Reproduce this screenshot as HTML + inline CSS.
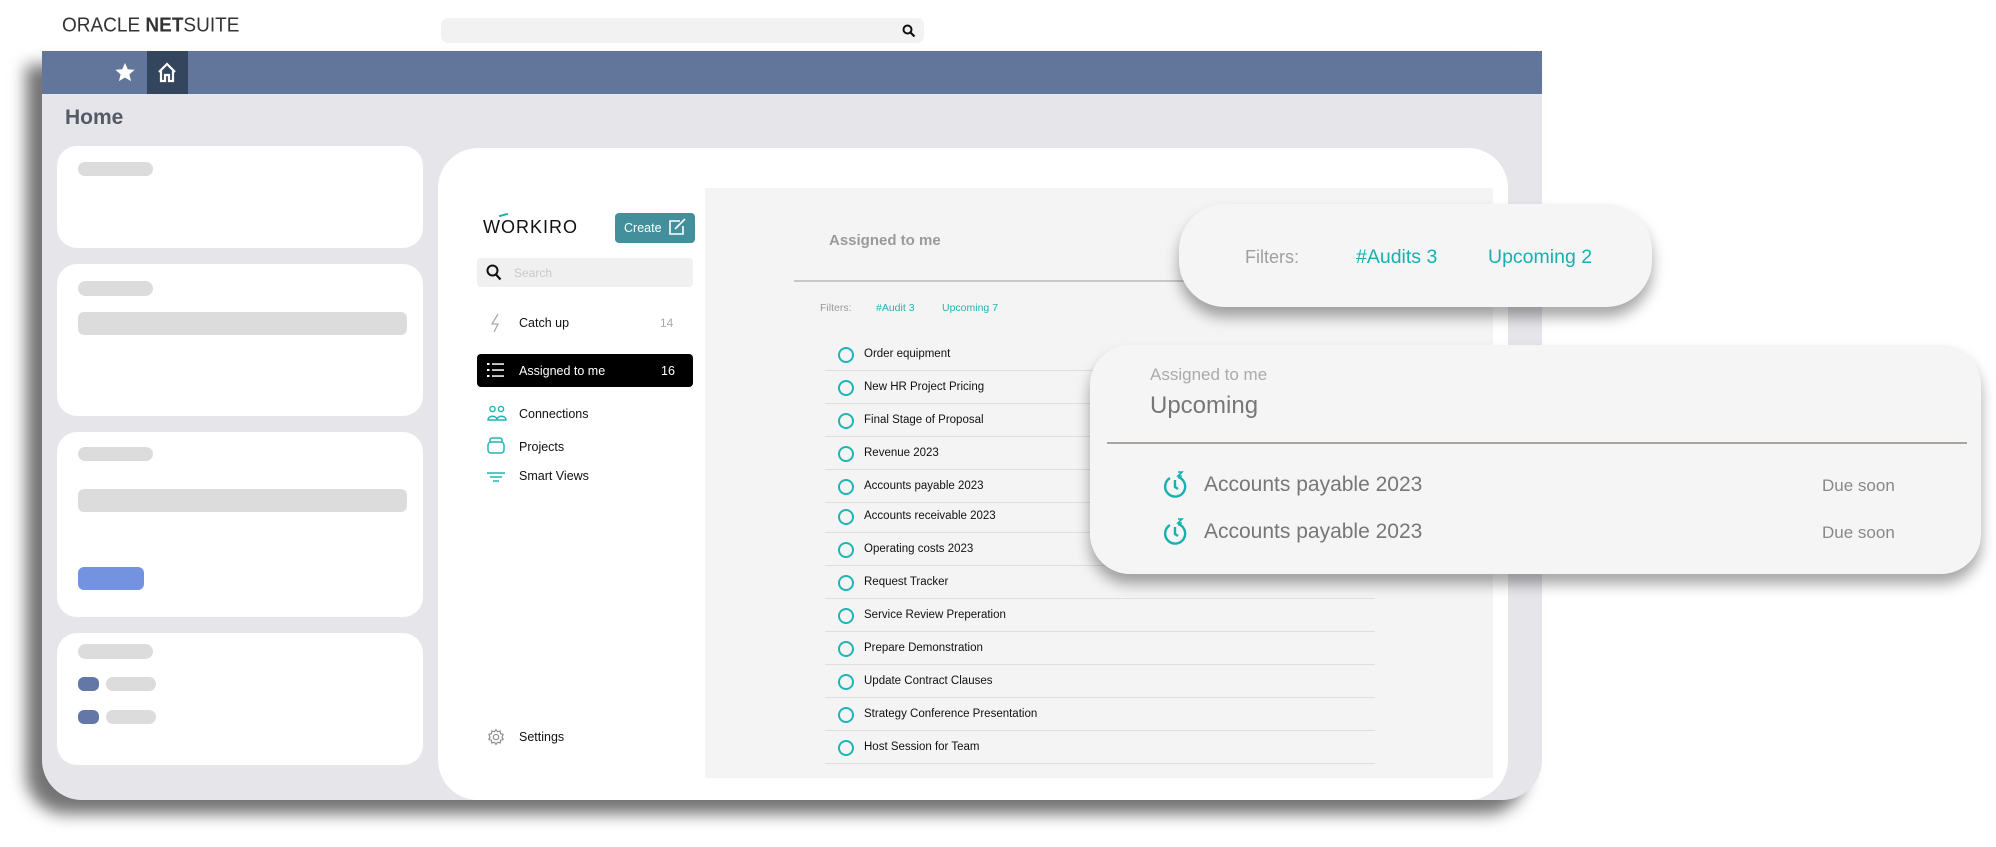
<!DOCTYPE html>
<html><head><meta charset="utf-8"><style>
*{box-sizing:border-box;margin:0;padding:0}
body{width:1996px;height:847px;background:#fff;position:relative;overflow:hidden;font-family:"Liberation Sans",sans-serif}
.a{position:absolute}
.pill{position:absolute;background:#dcdcdc;border-radius:8px}
.card{position:absolute;left:57px;width:366px;background:#fff;border-radius:20px}
.nav{position:absolute;left:519px;font-size:12.5px;color:#111}
.row{position:absolute;left:825px;width:550px;height:33px;border-bottom:1.5px solid #dedede}
.row i{position:absolute;left:13px;top:9px;width:16px;height:16px;border:2px solid #1fb5b5;border-radius:50%}
.row span{position:absolute;left:39px;top:10px;font-size:11.5px;color:#111}
</style></head><body>
<div class="a" style="left:62px;top:15px;font-size:19px;color:#333;letter-spacing:0px;transform:scaleY(1.05)">ORACLE <b style="font-weight:bold">NET</b>SUITE</div>
<div class="a" style="left:441px;top:18px;width:483px;height:25px;background:#f2f2f2;border-radius:7px"></div>
<svg class="a" style="left:902px;top:24px" width="14" height="14" viewBox="0 0 14 14"><circle cx="5.5" cy="5.5" r="4" fill="none" stroke="#111" stroke-width="2"/><path d="M8.5 8.5l4 4" stroke="#111" stroke-width="2.2"/></svg>
<div class="a" style="left:42px;top:51px;width:1500px;height:749px;background:#e5e5ea;border-radius:0 0 40px 40px;box-shadow:-16px 14px 16px rgba(0,0,0,0.55)"></div>
<div class="a" style="left:42px;top:51px;width:1500px;height:43px;background:#62759b"></div>
<div class="a" style="left:147px;top:51px;width:41px;height:43px;background:#34465e"></div>
<svg class="a" style="left:114px;top:61px" width="22" height="22" viewBox="0 0 24 24"><path d="M12 2l3 7 7.5.6-5.7 5 1.8 7.4L12 18l-6.6 4 1.8-7.4-5.7-5L9 9z" fill="#fff"/></svg>
<svg class="a" style="left:156px;top:62px" width="22" height="21" viewBox="0 0 22 21"><path d="M3 10L11 2l8 8M5 8v11h4v-6h4v6h4V8" fill="none" stroke="#fff" stroke-width="2.2"/></svg>
<div class="a" style="left:65px;top:106px;font-size:21px;font-weight:bold;color:#555a66">Home</div>
<div class="card" style="top:146px;height:102px"></div>
<div class="pill" style="left:78px;top:162px;width:75px;height:14px"></div>
<div class="card" style="top:264px;height:152px"></div>
<div class="pill" style="left:78px;top:281px;width:75px;height:15px"></div>
<div class="pill" style="left:78px;top:312px;width:329px;height:23px;border-radius:6px"></div>
<div class="card" style="top:432px;height:185px"></div>
<div class="pill" style="left:78px;top:447px;width:75px;height:14px"></div>
<div class="pill" style="left:78px;top:489px;width:329px;height:23px;border-radius:6px"></div>
<div class="a" style="left:78px;top:567px;width:66px;height:23px;background:#7393e0;border-radius:6px"></div>
<div class="card" style="top:633px;height:132px"></div>
<div class="pill" style="left:78px;top:644px;width:75px;height:15px"></div>
<div class="a" style="left:78px;top:677px;width:21px;height:14px;background:#6478a8;border-radius:6px"></div>
<div class="pill" style="left:106px;top:677px;width:50px;height:14px"></div>
<div class="a" style="left:78px;top:710px;width:21px;height:14px;background:#6478a8;border-radius:6px"></div>
<div class="pill" style="left:106px;top:710px;width:50px;height:14px"></div>
<div class="a" style="left:438px;top:148px;width:1070px;height:652px;background:#fff;border-radius:40px"></div>
<div class="a" style="left:705px;top:188px;width:788px;height:590px;background:#f4f4f4"></div>
<div class="a" style="left:483px;top:217px;font-size:18px;color:#111;letter-spacing:1px">WORKIRO</div>
<div class="a" style="left:499px;top:214px;width:9px;height:2px;background:#2aa;transform:rotate(-15deg)"></div>
<div class="a" style="left:615px;top:213px;width:80px;height:30px;background:#43909c;border-radius:4px;color:#fff;font-size:12.5px;padding:8px 0 0 9px">Create</div>
<svg class="a" style="left:668px;top:218px" width="20" height="18" viewBox="0 0 20 18"><path d="M12 3H2v13h13V8" fill="none" stroke="#fff" stroke-width="1.6"/><path d="M7 11l10-10" stroke="#fff" stroke-width="1.6"/></svg>
<div class="a" style="left:477px;top:258px;width:216px;height:29px;background:#f0f0f0;border-radius:4px"></div>
<svg class="a" style="left:486px;top:264px" width="16" height="17" viewBox="0 0 16 17"><circle cx="6.5" cy="6.5" r="5" fill="none" stroke="#111" stroke-width="2"/><path d="M10 10.5l4.5 5" stroke="#111" stroke-width="2.2"/></svg>
<div class="a" style="left:514px;top:266px;font-size:12px;color:#c8c8c8">Search</div>
<svg class="a" style="left:490px;top:313px" width="12" height="20" viewBox="0 0 12 20"><path d="M8 1L2 11h6l-4 8" fill="none" stroke="#aaa" stroke-width="1.3"/></svg>
<div class="nav" style="top:316px">Catch up</div>
<div class="a" style="left:660px;top:316px;font-size:12px;color:#aaa">14</div>
<div class="a" style="left:477px;top:354px;width:216px;height:33px;background:#000;border-radius:4px"></div>
<svg class="a" style="left:487px;top:362px" width="18" height="16" viewBox="0 0 18 16"><g fill="#fff"><rect x="0" y="1" width="2.5" height="2"/><rect x="0" y="7" width="2.5" height="2"/><rect x="0" y="13" width="2.5" height="2"/><rect x="5" y="1.3" width="12" height="1.5"/><rect x="5" y="7.3" width="12" height="1.5"/><rect x="5" y="13.3" width="12" height="1.5"/></g></svg>
<div class="nav" style="top:364px;color:#fff">Assigned to me</div>
<div class="a" style="left:661px;top:364px;font-size:12.5px;color:#fff">16</div>
<svg class="a" style="left:487px;top:405px" width="20" height="16" viewBox="0 0 20 16"><g fill="none" stroke="#1fb5b5" stroke-width="1.4"><circle cx="5.5" cy="4" r="2.6"/><circle cx="14" cy="4" r="2.6"/><path d="M1 15c0-5 9-5 9 0zM10 15c0-5 9-5 9 0z"/></g></svg>
<div class="nav" style="top:407px">Connections</div>
<svg class="a" style="left:487px;top:437px" width="18" height="17" viewBox="0 0 18 17"><g fill="none" stroke="#1fb5b5" stroke-width="1.5"><rect x="1" y="5" width="16" height="11" rx="3"/><path d="M3 5V3a2 2 0 012-2h8a2 2 0 012 2v2"/></g></svg>
<div class="nav" style="top:440px">Projects</div>
<svg class="a" style="left:487px;top:471px" width="18" height="12" viewBox="0 0 18 12"><g stroke="#1fb5b5" stroke-width="1.5"><path d="M0 2h18M3 6h12M6 10h6"/></g></svg>
<div class="nav" style="top:469px">Smart Views</div>
<svg class="a" style="left:487px;top:728px" width="18" height="18" viewBox="0 0 24 24"><g fill="none" stroke="#888" stroke-width="1.5"><circle cx="12" cy="12" r="3.5"/><path d="M12 2l2 3 3.5-1 .5 3.5 3.5 1-1.5 3.5 1.5 3.5-3.5 1-.5 3.5-3.5-1-2 3-2-3-3.5 1-.5-3.5-3.5-1L4 12 2.5 8.5l3.5-1L6.5 4 10 5z"/></g></svg>
<div class="nav" style="top:730px">Settings</div>
<div class="a" style="left:829px;top:232px;font-size:15px;font-weight:bold;color:#9a9a9a">Assigned to me</div>
<div class="a" style="left:794px;top:280px;width:700px;height:2px;background:#c8c8c8"></div>
<div class="a" style="left:820px;top:302px;font-size:10.5px;color:#999">Filters:</div>
<div class="a" style="left:876px;top:302px;font-size:10.5px;color:#1fb5b5">#Audit 3</div>
<div class="a" style="left:942px;top:302px;font-size:10.5px;color:#1fb5b5">Upcoming 7</div>
<div class="row" style="top:338px"><i></i><span>Order equipment</span></div>
<div class="row" style="top:371px"><i></i><span>New HR Project Pricing</span></div>
<div class="row" style="top:404px"><i></i><span>Final Stage of Proposal</span></div>
<div class="row" style="top:437px"><i></i><span>Revenue 2023</span></div>
<div class="row" style="top:470px"><i></i><span>Accounts payable 2023</span></div>
<div class="row" style="top:500px"><i></i><span>Accounts receivable 2023</span></div>
<div class="row" style="top:533px"><i></i><span>Operating costs 2023</span></div>
<div class="row" style="top:566px"><i></i><span>Request Tracker</span></div>
<div class="row" style="top:599px"><i></i><span>Service Review Preperation</span></div>
<div class="row" style="top:632px"><i></i><span>Prepare Demonstration</span></div>
<div class="row" style="top:665px"><i></i><span>Update Contract Clauses</span></div>
<div class="row" style="top:698px"><i></i><span>Strategy Conference Presentation</span></div>
<div class="row" style="top:731px"><i></i><span>Host Session for Team</span></div>
<div class="a" style="left:1179px;top:204px;width:473px;height:103px;background:#f5f5f5;border-radius:46px;box-shadow:0 10px 14px rgba(0,0,0,0.35)"></div>
<div class="a" style="left:1245px;top:247px;font-size:18px;color:#a0a0a0">Filters:</div>
<div class="a" style="left:1356px;top:246px;font-size:19.5px;color:#16b0b0">#Audits 3</div>
<div class="a" style="left:1488px;top:246px;font-size:19.5px;color:#16b0b0">Upcoming 2</div>
<div class="a" style="left:1090px;top:345px;width:891px;height:229px;background:#f5f5f5;border-radius:40px;box-shadow:0 10px 14px rgba(0,0,0,0.35)"></div>
<div class="a" style="left:1150px;top:365px;font-size:17px;color:#aaa">Assigned to me</div>
<div class="a" style="left:1150px;top:392px;font-size:24px;color:#777">Upcoming</div>
<div class="a" style="left:1107px;top:442px;width:860px;height:2px;background:#a8a4a0"></div>
<svg class="a" style="left:1163px;top:471px" width="26" height="28" viewBox="0 0 26 28"><g fill="none" stroke="#16b0b0" stroke-width="2.4"><path d="M15 6A10 10 0 1 1 7 7"/><path d="M12 9v7l3 2"/><path d="M15 1h4l-4 4h4" stroke-width="1.6"/></g></svg>
<div class="a" style="left:1204px;top:473px;font-size:21px;color:#777">Accounts payable 2023</div>
<div class="a" style="left:1822px;top:476px;font-size:17px;color:#888">Due soon</div>
<svg class="a" style="left:1163px;top:518px" width="26" height="28" viewBox="0 0 26 28"><g fill="none" stroke="#16b0b0" stroke-width="2.4"><path d="M15 6A10 10 0 1 1 7 7"/><path d="M12 9v7l3 2"/><path d="M15 1h4l-4 4h4" stroke-width="1.6"/></g></svg>
<div class="a" style="left:1204px;top:520px;font-size:21px;color:#777">Accounts payable 2023</div>
<div class="a" style="left:1822px;top:523px;font-size:17px;color:#888">Due soon</div>
</body></html>
